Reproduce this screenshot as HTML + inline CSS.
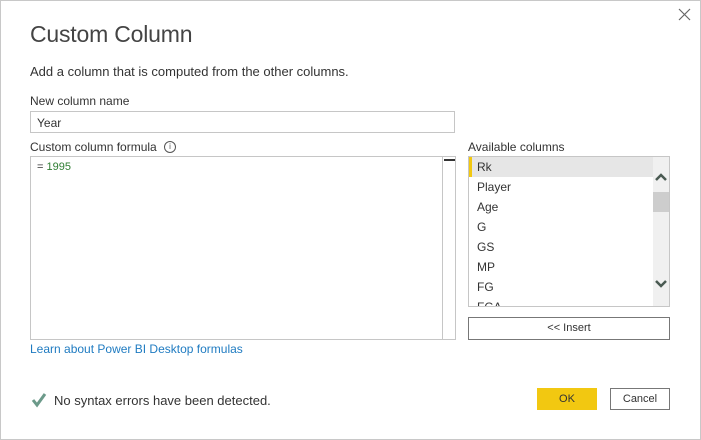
<!DOCTYPE html>
<html><head><style>
*{margin:0;padding:0;box-sizing:border-box}
body{width:701px;height:440px;background:#fff;font-family:"Liberation Sans",sans-serif;color:#333;position:relative;overflow:hidden}
.win{position:absolute;left:0;top:0;width:701px;height:440px;border:1px solid #c8c8c8}
.a{position:absolute;white-space:nowrap}
.box{position:absolute;border:1px solid #c6c6c6;background:#fff}
.it{position:absolute;left:8px;font-size:12px;color:#333}
</style></head><body>
<div class="win"></div>
<div class="a" style="left:30px;top:21px;font-size:23px;color:#444;letter-spacing:-0.2px">Custom Column</div>
<div class="a" style="left:30px;top:64px;font-size:13px;color:#333">Add a column that is computed from the other columns.</div>
<div class="a" style="left:30px;top:94px;font-size:12px">New column name</div>
<div class="box" style="left:30px;top:111px;width:425px;height:22px"><span class="a" style="left:6px;top:4px;font-size:12px">Year</span></div>
<div class="a" style="left:30px;top:140px;font-size:12px">Custom column formula</div>
<div class="a" style="left:164px;top:141px;width:12px;height:12px;border:1px solid #555;border-radius:50%;font-size:8px;text-align:center;line-height:10px;color:#555">i</div>
<div class="box" style="left:30px;top:156px;width:426px;height:184px">
 <span class="a" style="left:6px;top:4px;font-size:11px;color:#333">= <span style="color:#2e7d32">1995</span></span>
 <div class="a" style="left:411px;top:-1px;width:1px;height:184px;background:#c6c6c6"></div>
 <div class="a" style="left:413px;top:2px;width:11px;height:2px;background:#333"></div>
</div>
<div class="a" style="left:468px;top:140px;font-size:12px">Available columns</div>
<div class="box" style="left:468px;top:156px;width:202px;height:151px;overflow:hidden">
 <div class="a" style="left:0;top:0;width:184px;height:20px;background:#e6e6e6;border-left:3px solid #f2c811"></div>
 <div class="it" style="top:3px">Rk</div>
 <div class="it" style="top:23px">Player</div>
 <div class="it" style="top:43px">Age</div>
 <div class="it" style="top:63px">G</div>
 <div class="it" style="top:83px">GS</div>
 <div class="it" style="top:103px">MP</div>
 <div class="it" style="top:123px">FG</div>
 <div class="it" style="top:143px">FGA</div>
 <div class="a" style="left:184px;top:0;width:16px;height:149px;background:#f0f0f0"></div>
 <div class="a" style="left:184px;top:35px;width:16px;height:20px;background:#cdcdcd"></div>
 <svg class="a" style="left:185px;top:15px" width="14" height="10"><path d="M2 8 L7 3 L12 8" stroke="#4a5a52" stroke-width="2.5" fill="none"/></svg>
 <svg class="a" style="left:185px;top:122px" width="14" height="10"><path d="M2 2 L7 7 L12 2" stroke="#4a5a52" stroke-width="2.5" fill="none"/></svg>
</div>
<div class="box" style="left:468px;top:317px;width:202px;height:23px;border-color:#777;text-align:center;font-size:11px;line-height:20px">&lt;&lt; Insert</div>
<div class="a" style="left:30px;top:342px;font-size:12px;color:#1f7bc1">Learn about Power BI Desktop formulas</div>
<svg class="a" style="left:31px;top:392px" width="16" height="16"><path d="M2 8 L6 13 L14 2" stroke="#6c9a8a" stroke-width="3" fill="none"/></svg>
<div class="a" style="left:54px;top:393px;font-size:13px;color:#333">No syntax errors have been detected.</div>
<div class="a" style="left:537px;top:388px;width:60px;height:22px;background:#f2c811;font-size:11px;text-align:center;line-height:22px;color:#333">OK</div>
<div class="a" style="left:610px;top:388px;width:60px;height:22px;border:1px solid #777;font-size:11px;text-align:center;line-height:20px;color:#333">Cancel</div>
<svg class="a" style="left:678px;top:8px" width="13" height="13"><path d="M1 1 L12 12 M12 1 L1 12" stroke="#666" stroke-width="1.2"/></svg>
</body></html>
